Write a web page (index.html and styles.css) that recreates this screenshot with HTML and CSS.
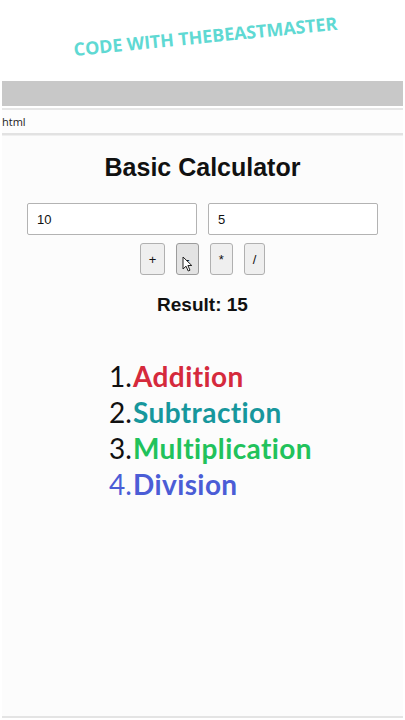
FILE: index.html
```html
<!DOCTYPE html>
<html lang="en">
<head>
    <meta charset="UTF-8">
    <meta name="viewport" content="width=device-width, initial-scale=1.0">
    <title>Basic Calculator</title>
    <link rel="stylesheet" href="styles.css">
</head>
<body>

    <!-- watermark -->
    <div class="watermark">
        <span>CODE WITH THEBEASTMASTER</span>
    </div>

    <!-- browser chrome -->
    <div class="toolbar"></div>
    <div class="tab-line"></div>
    <div class="address">html</div>
    <div class="address-line"></div>

    <div class="page">
        <h1>Basic Calculator</h1>

        <div class="inputs">
            <input type="text" id="num1" value="10">
            <input type="text" id="num2" value="5">
        </div>

        <div class="buttons">
            <button type="button" onclick="calculate('+')">+</button>
            <button type="button" class="hover" onclick="calculate('-')">-
                <svg class="cursor" width="11" height="16" viewBox="0 0 11 16">
                    <path d="M1 1 L1 13 L4 10.2 L6.2 15 L8 14.2 L5.9 9.5 L9.8 9.5 Z" fill="#fff" stroke="#222" stroke-width="1" stroke-linejoin="round"/>
                </svg>
            </button>
            <button type="button" onclick="calculate('*')">*</button>
            <button type="button" onclick="calculate('/')">/</button>
        </div>

        <p class="result">Result: <span id="result">15</span></p>

        <!-- operations list -->
        <ol class="steps">
            <li><span class="num">1.</span><span class="label add">Addition</span></li>
            <li><span class="num">2.</span><span class="label sub">Subtraction</span></li>
            <li><span class="num">3.</span><span class="label mul">Multiplication</span></li>
            <li class="div"><span class="num">4.</span><span class="label">Division</span></li>
        </ol>
    </div>

    <script>
        function calculate(op) {
            const a = parseFloat(document.getElementById("num1").value);
            const b = parseFloat(document.getElementById("num2").value);
            let result = 0;
            if (op === '+') result = a + b;
            if (op === '-') result = a - b;
            if (op === '*') result = a * b;
            if (op === '/') result = a / b;
            document.getElementById("result").textContent = result;
        }
    </script>

</body>
</html>
```

FILE: styles.css
```css
body {
    margin: 0;
    padding: 0;
    background-color: #ffffff;
    font-family: 'Liberation Sans', Arial, sans-serif;
}

.watermark {
    height: 81px;
    display: flex;
    justify-content: center;
    align-items: center;
}

.watermark span {
    font-family: 'Open Sans', sans-serif;
    font-weight: 700;
    font-size: 18px;
    letter-spacing: -0.1px;
    color: #5fd9d3;
    transform: translate(3px, -5px) rotate(-5.7deg);
}

.toolbar {
    height: 25px;
    margin: 0 2px;
    background-color: #c8c8c8;
}

.tab-line {
    height: 2px;
    margin: 2px 2px 0;
    background-color: #e6e6e6;
}

.address {
    height: 23px;
    margin: 0 2px;
    background-color: #fdfdfd;
    font-family: 'Open Sans', sans-serif;
    font-size: 11px;
    line-height: 23px;
    color: #222;
}

.address-line {
    height: 2px;
    margin: 0 2px;
    background-color: #e2e2e2;
    border-bottom: 1px solid #efefef;
}

.page {
    height: 580px;
    margin: 0 2px;
    background-color: #fcfcfc;
    border-bottom: 2px solid #e4e4e4;
    text-align: center;
    overflow: hidden;
}

h1 {
    margin: 17px 0 0;
    font-size: 25px;
    line-height: 29px;
    font-weight: bold;
    color: #111;
}

.inputs {
    display: flex;
    justify-content: center;
    gap: 11px;
    margin-top: 21px;
}

.inputs input {
    width: 170px;
    height: 32px;
    box-sizing: border-box;
    padding: 0 9px;
    border: 1px solid #b3b3b3;
    border-radius: 2px;
    background-color: #fff;
    font-family: 'Liberation Sans', Arial, sans-serif;
    font-size: 13px;
    color: #111;
}

.buttons {
    display: flex;
    justify-content: center;
    gap: 11px;
    margin-top: 8px;
}

.buttons button {
    position: relative;
    height: 32px;
    padding: 0 8px;
    border: 1px solid #b0b0b0;
    border-radius: 3px;
    background-color: #efefef;
    font-family: 'Liberation Sans', Arial, sans-serif;
    font-size: 13px;
    color: #111;
    cursor: pointer;
}

.buttons button.hover {
    background-color: #e3e3e3;
    border-color: #9c9c9c;
}

.cursor {
    position: absolute;
    left: 5px;
    top: 12px;
}

.result {
    margin: 19px 0 0;
    font-size: 19px;
    line-height: 22px;
    font-weight: bold;
    color: #111;
}

.steps {
    list-style: none;
    margin: 42px 0 0;
    padding: 0 0 0 107px;
    text-align: left;
    font-family: 'Lato', sans-serif;
    font-size: 28px;
    line-height: 36px;
}

.steps li {
    display: flex;
    align-items: baseline;
}

.steps .num {
    width: 24px;
    color: #111;
    font-weight: 400;
}

.steps .label {
    font-weight: 700;
    letter-spacing: 0.4px;
}

.steps .add {
    color: #d52a3c;
}

.steps .sub {
    color: #17979c;
}

.steps .mul {
    color: #21c25b;
}

.steps .div .num,
.steps .div .label {
    color: #4b5dd6;
}
```
